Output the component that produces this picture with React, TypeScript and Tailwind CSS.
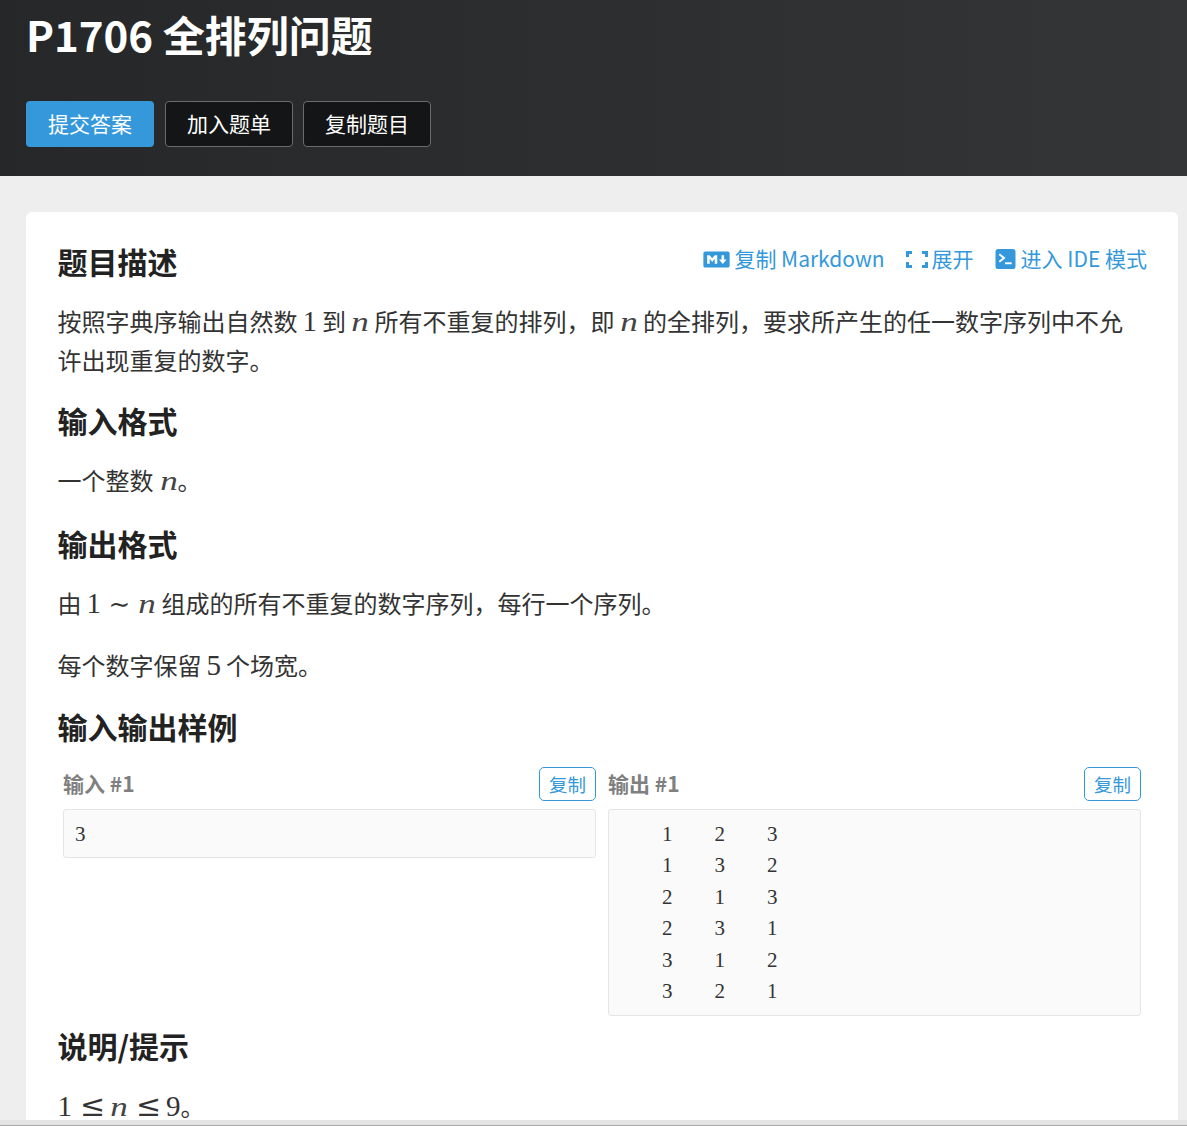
import React from "react";
import { FaMarkdown } from "react-icons/fa";

const cjk = "font-['Noto_Sans_CJK_SC','Noto_Sans',sans-serif]";

function N({ className = "mx-[5.25px]" }: { className?: string }) {
  return (
    <span className={"inline-block w-[18px] text-center font-['Liberation_Serif',serif] text-[27px] leading-none italic scale-x-[1.3] text-[#444] " + className}>n</span>
  );
}

function D({ children, className = "mx-[5px]" }: { children: React.ReactNode; className?: string }) {
  return <span className={"font-['Liberation_Serif',serif] text-[29px] leading-none " + className}>{children}</span>;
}

function Op({ children, className = "" }: { children: React.ReactNode; className?: string }) {
  return <span className={"inline-block text-center font-['DejaVu_Serif',serif] leading-none " + className}>{children}</span>;
}

function H2({ children, className = "" }: { children: React.ReactNode; className?: string }) {
  return <h2 className={"text-[30px] leading-[36px] font-bold text-[#222] " + className}>{children}</h2>;
}

function P({ children, className = "" }: { children: React.ReactNode; className?: string }) {
  return <p className={"text-[24px] leading-[39px] text-[#333] " + className}>{children}</p>;
}

function Sample({ label, lines, height }: { label: string; lines: string[]; height: string }) {
  return (
    <div className="flex-1 min-w-0">
      <div className="flex items-center justify-between h-[34px] mb-[8px]">
        <span className="text-[21px] leading-[30px] pb-[2px] font-bold text-[#7f7f7f]">{label}</span>
        <button className="w-[57px] h-[34px] border border-[#3498db] rounded-[5px] text-[18.5px] leading-none text-[#3498db] bg-white">复制</button>
      </div>
      <pre className={"border border-[#e5e5e5] rounded-[3px] bg-[#fafafa] px-[11px] pt-[9px] pb-[8px] text-[21px] leading-[31.4px] text-[#333] font-['Liberation_Serif',serif] " + height}>
        {lines.join("\n")}
      </pre>
    </div>
  );
}

function TerminalIcon() {
  return (
    <svg viewBox="0 0 21 21" className="w-[21px] h-[20px] ml-[21px]">
      <rect x="0" y="0" width="21" height="21" rx="3" fill="#3498db" />
      <path d="M4 5.5 L9 9.5 L4 13.5" fill="none" stroke="#fff" strokeWidth="2" />
      <path d="M10 15 H17" fill="none" stroke="#fff" strokeWidth="2" />
    </svg>
  );
}

function ExpandIcon() {
  return (
    <svg viewBox="0 0 22 17" className="w-[22px] h-[17px] ml-[21px]">
      <path
        d="M6 1.5 H1.5 V6 M16 1.5 H20.5 V6 M6 15.5 H1.5 V11 M16 15.5 H20.5 V11"
        fill="none"
        stroke="#3498db"
        strokeWidth="3"
      />
    </svg>
  );
}

const f = "\u2007\u2007\u2007\u2007";

export default function App() {
  const btn = "w-[128px] h-[46px] rounded-[4px] text-[21px] leading-[30px] pb-[2px] text-white";
  return (
    <div className={"w-[1187px] h-[1126px] overflow-hidden flex flex-col bg-[#eeeeee] " + cjk}>
      <header className="h-[176px] shrink-0 bg-gradient-to-r from-[#262729] to-[#343537] px-[26px]">
        <h1 className="text-[42px] leading-[74px] -mt-[3px] font-bold text-white whitespace-nowrap">P1706 全排列问题</h1>
        <div className="flex mt-[30px]">
          <button className={btn + " bg-[#3498db]"}>提交答案</button>
          <button className={btn + " ml-[11px] bg-[#141516] border border-[#6b6b6b]"}>加入题单</button>
          <button className={btn + " ml-[10px] bg-[#141516] border border-[#6b6b6b]"}>复制题目</button>
        </div>
      </header>
      <main className="flex-1 min-h-0 overflow-hidden px-[26px] pr-[9px] pt-[36px]">
        <section className="bg-white rounded-t-[6px] pl-[31.5px] pr-[31px] pt-[31px] h-[1000px]">
          <div className="flex items-start justify-between">
            <H2>题目描述</H2>
            <div className="flex items-center h-[32px] text-[21px] text-[#3498db]">
              <FaMarkdown className="w-[27px] h-[21px]" />
              <span className="ml-[4px]">复制 Markdown</span>
              <ExpandIcon />
              <span className="ml-[4px]">展开</span>
              <TerminalIcon />
              <span className="ml-[5px]">进入 IDE 模式</span>
            </div>
          </div>
          <P className="mt-[22px]">
            按照字典序输出自然数<D>1</D>到<N />所有不重复的排列，即<N />的全排列，要求所产生的任一数字序列中不允<br />许出现重复的数字。
          </P>
          <H2 className="mt-[23px]">输入格式</H2>
          <P className="mt-[22px]">一个整数<N className="ml-[6px]" />。</P>
          <H2 className="mt-[26px]">输出格式</H2>
          <P className="mt-[22px]">由<D>1</D><Op className="w-[22px] mx-[2.5px] text-[26px]">∼</Op><N />组成的所有不重复的数字序列，每行一个序列。</P>
          <P className="mt-[23px]">每个数字保留<D>5</D>个场宽。</P>
          <H2 className="mt-[24px]">输入输出样例</H2>
          <div className="flex gap-[12px] ml-[5.5px] mr-[6px] mt-[23px] items-start">
            <Sample label="输入 #1" lines={["3"]} height="h-[49px]" />
            <Sample
              label="输出 #1"
              lines={[
                `${f}1${f}2${f}3`,
                `${f}1${f}3${f}2`,
                `${f}2${f}1${f}3`,
                `${f}2${f}3${f}1`,
                `${f}3${f}1${f}2`,
                `${f}3${f}2${f}1`,
              ]}
              height="h-[207px]"
            />
          </div>
          <H2 className="mt-[11px]">说明/提示</H2>
          <P className="mt-[23px]">
            <D className="mr-[8px]">1</D><Op className="w-[22px] text-[30px]">≤</Op><N className="mx-[8px]" /><Op className="w-[22px] text-[30px]">≤</Op><D className="ml-[8px]">9</D>。
          </P>
        </section>
      </main>
      <div className="h-[6px] shrink-0 bg-[#e4e4e4] border-b border-[#aaaaaa]" />
    </div>
  );
}
